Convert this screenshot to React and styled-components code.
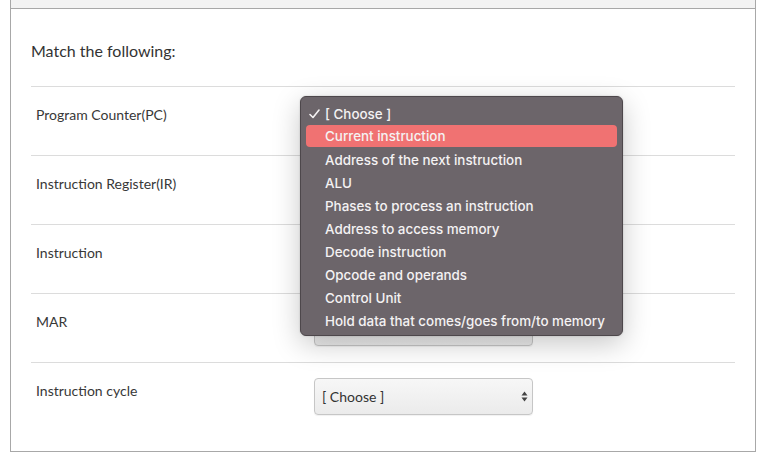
import React from 'react';
import styled, { createGlobalStyle } from 'styled-components';

const GlobalStyle = createGlobalStyle`
  html, body {
    margin: 0;
    padding: 0;
    background: #ffffff;
  }
  body {
    font-family: Lato, "Open Sans", "Liberation Sans", sans-serif;
  }
`;

const Page = styled.div`
  width: 779px;
  height: 452px;
  overflow: hidden;
  position: relative;
  background: #ffffff;
`;

const Card = styled.div`
  margin-left: 10px;
  width: 744px;
  height: 451px;
  border: 1px solid #a8a8a8;
  border-top: none;
  display: flex;
  flex-direction: column;
`;

const TopBand = styled.div`
  height: 8px;
  background: #f3f3f3;
  border-bottom: 1px solid #a8a8a8;
`;

const Body = styled.div`
  padding: 0 20px;
  display: flex;
  flex-direction: column;
`;

const Title = styled.div`
  height: 77px;
  display: flex;
  align-items: center;
  font-size: 16px;
  color: #333333;
  padding-top: 5px;
  box-sizing: border-box;
`;

const Row = styled.div`
  height: 69px;
  box-sizing: border-box;
  border-top: 1px solid #dcdcdc;
  display: grid;
  grid-template-columns: 283px 219px;
  align-items: start;
`;

const Label = styled.div`
  padding-left: 5px;
  padding-top: 19px;
  font-size: 14px;
  line-height: 18px;
  color: #383838;
`;

const SelectBox = styled.div`
  margin-top: 15px;
  height: 37px;
  box-sizing: border-box;
  border: 1px solid #c6c6c6;
  border-radius: 4px;
  background: linear-gradient(to bottom, #f7f7f7, #ebebeb);
  box-shadow: 0 1px 1px rgba(0, 0, 0, 0.06);
  display: flex;
  align-items: center;
  justify-content: space-between;
  padding: 0 4px 0 7px;
  font-size: 14px;
  color: #333333;
`;

const Arrows = () => (
  <svg width="7" height="11" viewBox="0 0 7 11">
    <path d="M3.5 0.5 L6.5 4.5 L0.5 4.5 Z" fill="#444" />
    <path d="M3.5 10.5 L6.5 6.5 L0.5 6.5 Z" fill="#444" />
  </svg>
);

const Menu = styled.div`
  position: absolute;
  left: 300px;
  top: 96px;
  width: 323px;
  height: 240px;
  box-sizing: border-box;
  padding: 5px 5px 3px;
  background: #6c656a;
  border: 1px solid #4d474b;
  border-radius: 6px;
  box-shadow: 0 8px 28px rgba(0, 0, 0, 0.22), 0 0 2px rgba(0, 0, 0, 0.2);
  font-family: Inter, "Noto Sans", "Liberation Sans", sans-serif;
`;

const MenuItem = styled.div`
  position: relative;
  height: 23px;
  display: flex;
  align-items: center;
  padding-left: 19px;
  border-radius: 4px;
  font-size: 13.4px;
  font-weight: 500;
  color: #f4f2f3;
  background: ${p => (p.$active ? '#f07272' : 'transparent')};
  ${p => p.$active && 'height: 22px; margin-bottom: 1px;'}
`;

const Check = styled.span`
  position: absolute;
  left: 3px;
  top: 0;
  height: 100%;
  display: flex;
  align-items: center;
`;

const rows = [
  'Program Counter(PC)',
  'Instruction Register(IR)',
  'Instruction',
  'MAR',
  'Instruction cycle',
];

const options = [
  '[ Choose ]',
  'Current instruction',
  'Address of the next instruction',
  'ALU',
  'Phases to process an instruction',
  'Address to access memory',
  'Decode instruction',
  'Opcode and operands',
  'Control Unit',
  'Hold data that comes/goes from/to memory',
];

export default function App() {
  return (
    <Page>
      <GlobalStyle />
      <Card>
        <TopBand />
        <Body>
          <Title>Match the following:</Title>
          {rows.map(r => (
            <Row key={r}>
              <Label>{r}</Label>
              <SelectBox>
                <span>[ Choose ]</span>
                <Arrows />
              </SelectBox>
            </Row>
          ))}
        </Body>
      </Card>
      <Menu>
        {options.map((o, i) => (
          <MenuItem key={o} $active={i === 1}>
            {i === 0 && (
              <Check>
                <svg width="11" height="10" viewBox="0 0 11 10">
                  <path d="M1 5.5 L4 8.5 L10 1" fill="none" stroke="#f4f2f3" strokeWidth="1.6" strokeLinecap="round" strokeLinejoin="round" />
                </svg>
              </Check>
            )}
            {o}
          </MenuItem>
        ))}
      </Menu>
    </Page>
  );
}
